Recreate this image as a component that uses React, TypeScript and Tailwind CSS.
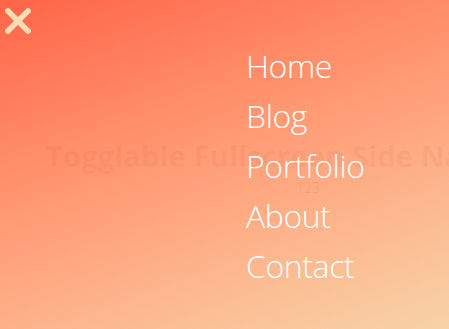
import React from 'react';

const links = ['Home', 'Blog', 'Portfolio', 'About', 'Contact'];

export default function App() {
  return (
    <div
      className="relative w-[449px] h-[329px] overflow-hidden bg-linear-160 from-[#ff6347] to-[#f7d3a8]"
      style={{ fontFamily: '"Open Sans", "Liberation Sans", sans-serif' }}
    >
      {/* page content behind the overlay */}
      <div className="flex flex-col pt-[137px] pl-[46px] whitespace-nowrap">
        <h1 className="text-[29px] leading-[38px] font-bold tracking-[0.2px] text-[#b83a20]/8">
          Togglable Fullscreen Side Nav
        </h1>
        <p className="pl-[250px] mt-[4px] text-[14px] leading-[18px] font-light text-[#b83a20]/15">123</p>
      </div>

      {/* fullscreen nav overlay */}
      <div className="absolute inset-0">
        <button className="absolute left-[5px] top-[8px] w-[26px] h-[26px]" aria-label="Close">
          <svg viewBox="0 0 26 26" className="w-full h-full">
            <path d="M3 3 L23 23 M23 3 L3 23" stroke="#f5deb3" strokeWidth="5.5" strokeLinecap="square" />
          </svg>
        </button>
        <nav className="h-full flex flex-col justify-center pl-[246px] pt-[3px]">
          {links.map((l) => (
            <a
              key={l}
              href="#"
              className="block text-[32px] leading-[50px] font-light text-white tracking-[-0.4px]"
            >
              {l}
            </a>
          ))}
        </nav>
      </div>
    </div>
  );
}
